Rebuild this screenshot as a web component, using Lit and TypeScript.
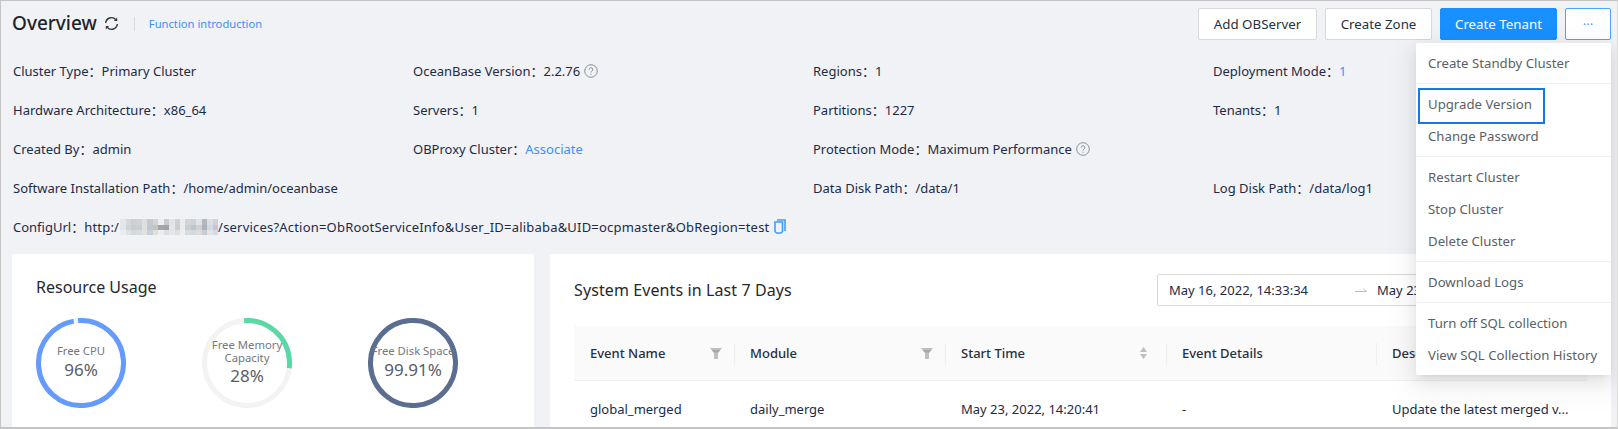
import { LitElement, html, css, svg } from "lit";
import { customElement } from "lit/decorators.js";

const info = [
  ["Cluster Type", "Primary Cluster"], ["OceanBase Version", "2.2.76", "help"], ["Regions", "1"], ["Deployment Mode", "1", "link"],
  ["Hardware Architecture", "x86_64"], ["Servers", "1"], ["Partitions", "1227"], ["Tenants", "1"],
  ["Created By", "admin"], ["OBProxy Cluster", "Associate", "link"], ["Protection Mode", "Maximum Performance", "help"], null,
  ["Software Installation Path", "/home/admin/oceanbase"], null, ["Data Disk Path", "/data/1"], ["Log Disk Path", "/data/log1"],
];

const helpIcon = html`<svg class="help" width="14" height="14" viewBox="0 0 14 14" fill="none" stroke="#8a8f99" stroke-width="1">
  <circle cx="7" cy="7" r="6.3"></circle>
  <path d="M5.2 5.6a1.8 1.8 0 1 1 2.7 1.5c-.6.4-.9.7-.9 1.4"></path>
  <path d="M7 9.8v1"></path></svg>`;

const menu = [
  ["Create Standby Cluster"], null, ["Upgrade Version", "focus"], ["Change Password"], null,
  ["Restart Cluster"], ["Stop Cluster"], ["Delete Cluster"], null, ["Download Logs"], null,
  ["Turn off SQL collection"], ["View SQL Collection History"],
];

const gauges = [
  { label: ["Free CPU"], value: "96%", arc: 98.2, color: "#659bff" },
  { label: ["Free Memory", "Capacity"], value: "28%", arc: 28, color: "#5ad8a6" },
  { label: ["Free Disk Space"], value: "99.91%", arc: 100, color: "#5b6e91" },
];

const mosaic = [
  ["#e4e6ea","#d6d8dd","#cfd0d4","#d2d2d6","#dcdee2","#c3c9d2","#d6d4d0","#eceef1","#c9ccce","#e2e3e6","#d0d2d2","#eaecef","#d2d6d6","#ccd2d6","#e0e2e4","#b3b7c0","#dcdee4","#ced0dc"],
  ["#e2e5e8","#cfd4d8","#c6ced0","#c9d0d2","#dfe0e4","#bec6d0","#c6c2ba","#a2a6ac","#a0a4aa","#e4e5e8","#cace cc","#eaecef","#c9ced4","#bec6cc","#ced0d6","#aeb2be","#d6d8e0","#c3c5d6"],
  ["#eaecef","#e0e1e4","#d6d8d9","#d9dcdc","#e0e1e4","#cad0d6","#e0dfda","#eceef1","#dededc","#e5e6e8","#dee0e0","#edeff2","#d7dce0","#d2d9de","#dedcd6","#c9ccd4","#e2e3e8","#d8d9e4"],
];

const filterIcon = html`<svg class="filter" width="12" height="11" viewBox="0 0 12 11"><path d="M0 0h12L8 5v6H4V5z" fill="#bfbfbf"></path><path d="M1.5 2h9L8 4.6H4z" fill="#a9a9a9"></path></svg>`;

@customElement("app-root")
export class AppRoot extends LitElement {
  static styles = css`
    :host { display: block; width: 1618px; height: 429px; overflow: hidden; font-family: "Noto Sans", "Noto Sans CJK SC", sans-serif; font-size: 13px; color: #1d2b45; }
    * { box-sizing: border-box; }
    .frame { position: relative; width: 1618px; height: 429px; overflow: hidden; background: #f0f2f6; border: 1px solid #c4c4c4; border-bottom-width: 2px; border-right-color: #dcdcdc; padding: 7px 6px 0 11px; }
    .head { display: flex; align-items: center; height: 31px; }
    h1 { margin: 0; font-size: 19px; font-weight: 500; color: #1f2329; line-height: 31px; }
    .refresh { margin-left: 7px; display: block; }
    .sep { width: 1px; height: 14px; background: #d8dade; margin: 0 14px 0 15px; }
    a { color: #3f8ffb; text-decoration: none; }
    .intro { font-size: 11.2px; }
    .spacer { flex: 1; }
    .btn { height: 32px; border: 1px solid #d9d9d9; background: #fff; border-radius: 2px; display: flex; align-items: center; justify-content: center; margin-left: 8px; font-size: 13.3px; color: #2a2f3a; }
    .b1 { width: 119px; } .b2 { width: 107px; } .b3 { width: 117px; background: #1890ff; border-color: #1890ff; color: #fff; }
    .b4 { width: 46px; border-color: #4da3ff; color: #4da3ff; }
    .grid { display: grid; grid-template-columns: repeat(4, 400px); grid-auto-rows: 39px; margin-top: 12px; padding-left: 1px; }
    .cell { display: flex; align-items: center; white-space: nowrap; }
    .help { margin-left: 4px; }
    .full { grid-column: 1 / -1; }
    .url { letter-spacing: .2px; }
    .mosaic { display: grid; grid-template-columns: repeat(18, 1fr); grid-template-rows: 6px 5px 5px; width: 98px; height: 16px; margin-left: 1px; flex: none; }
    .mosaic i { display: block; }
    .copy { margin-left: 5px; display: block; }
    .cards { display: grid; grid-template-columns: 522px 1fr; gap: 16px; margin-top: 8px; }
    .card { background: #fff; border-radius: 2px; height: 180px; overflow: hidden; }
    .res { padding: 21px 24px; }
    h2 { margin: 0; font-size: 16px; font-weight: 400; color: #25282d; line-height: 24px; }
    .events h2 { letter-spacing: .1px; }
    .gauges { display: grid; grid-template-columns: repeat(3, 166px); margin-top: 19px; }
    .gauge { position: relative; width: 90px; height: 90px; }
    .gauge svg { display: block; }
    .gtext { position: absolute; inset: 0; display: flex; flex-direction: column; align-items: center; justify-content: center; color: #73777f; white-space: nowrap; font-size: 11.3px; line-height: 12.5px; }
    .gtext b { font-weight: 400; font-size: 17px; line-height: 22px; margin-top: 1px; color: #595d66; }
    .events { padding: 20px 24px 0; }
    .ehead { display: flex; align-items: center; justify-content: space-between; height: 32px; }
    .range { width: 430px; height: 32px; border: 1px solid #d9d9d9; border-radius: 2px; display: flex; align-items: center; padding-left: 11px; flex: none; white-space: nowrap; }
    .arr { margin: 0 10px 0 47px; display: block; }
    .table { margin-top: 20px; }
    .tr { display: grid; grid-template-columns: 160px 211px 221px 210px 211px; }
    .th { height: 55px; background: #fafafa; border-bottom: 1px solid #f0f0f0; }
    .th > div { display: flex; align-items: center; justify-content: space-between; padding: 0 12px 0 16px; font-weight: 500; color: #2a2f3a; position: relative; white-space: nowrap; overflow: hidden; }
    .th > div + div::before { content: ""; position: absolute; left: 0; top: 17px; height: 22px; width: 1px; background: #eeeeee; }
    .td { height: 56px; }
    .td > div { display: flex; align-items: center; padding: 0 16px; white-space: nowrap; }
    .sort { display: block; margin-right: 6px; }
    .menu { position: absolute; left: 1415px; top: 42px; width: 195px; background: #fff; border-radius: 2px; padding: 4px 0; color: #5a5f68; font-size: 13.2px;
      box-shadow: 0 3px 6px -4px rgba(0,0,0,.12), 0 6px 16px 0 rgba(0,0,0,.08), 0 9px 28px 8px rgba(0,0,0,.05); }
    .mi { height: 32px; display: flex; align-items: center; padding: 0 12px; white-space: nowrap; position: relative; }
    .mi.focus::after { content: ""; position: absolute; left: 2px; top: 0; width: 123px; height: 32px; border: 2px solid #1677e6; }
    .div { height: 1px; background: #f0f0f0; margin: 4px 0; }
  `;

  gauge(g: (typeof gauges)[number]) {
    const r = 42.5;
    const c = 2 * Math.PI * r;
    const len = (g.arc / 100) * c;
    return html`<div class="gauge">
      <svg width="90" height="90" viewBox="0 0 90 90">
        <circle cx="45" cy="45" r="${r}" fill="none" stroke="#f3f3f3" stroke-width="5"></circle>
        ${svg`<circle cx="45" cy="45" r="${r}" fill="none" stroke="${g.color}" stroke-width="5"
          stroke-dasharray="${len} ${c - len}" transform="rotate(-94 45 45)"></circle>`}
      </svg>
      <div class="gtext">${g.label.map((l) => html`<span>${l}</span>`)}<b>${g.value}</b></div>
    </div>`;
  }

  render() {
    return html`<div class="frame">
      <div class="head">
        <h1>Overview</h1>
        <svg class="refresh" width="15" height="15" viewBox="0 0 15 15" fill="none" stroke="#333" stroke-width="1.4">
          <path d="M1.7 7A5.8 5.8 0 0 1 11.8 3.6"></path><path d="M13.3 8A5.8 5.8 0 0 1 3.2 11.4"></path>
          <path d="M13.2 1.6v3.4H9.9z" fill="#333" stroke="none"></path><path d="M1.8 13.4V10h3.3z" fill="#333" stroke="none"></path>
        </svg>
        <span class="sep"></span>
        <a class="intro">Function introduction</a>
        <span class="spacer"></span>
        <div class="btn b1">Add OBServer</div>
        <div class="btn b2">Create Zone</div>
        <div class="btn b3">Create Tenant</div>
        <div class="btn b4">···</div>
      </div>
      <div class="grid">
        ${info.map((row) => row ? html`<div class="cell"><span>${row[0]}：</span>${row[2] === "link" ? html`<a>${row[1]}</a>` : html`<span>${row[1]}</span>`}${row[2] === "help" ? helpIcon : ""}</div>` : html`<div></div>`)}
        <div class="cell full"><span>ConfigUrl：</span><span class="url">http:/</span><span class="mosaic">${mosaic.flat().map((c) => html`<i style="background:${c.replace(" ", "")}"></i>`)}</span><span class="url">/services?Action=ObRootServiceInfo&amp;User_ID=alibaba&amp;UID=ocpmaster&amp;ObRegion=test</span>
          <svg class="copy" width="12" height="15" viewBox="0 0 12 15" fill="none" stroke="#3f9bff" stroke-width="1.6"><path d="M3 1h8v11"></path><path d="M1 3h7.5v9.5L7 14H2.5L1 12.5z"></path></svg></div>
      </div>
      <div class="cards">
        <div class="card res">
          <h2>Resource Usage</h2>
          <div class="gauges">${gauges.map((g) => this.gauge(g))}</div>
        </div>
        <div class="card events">
          <div class="ehead"><h2>System Events in Last 7 Days</h2>
            <div class="range"><span>May 16, 2022, 14:33:34</span><svg class="arr" width="12" height="7" viewBox="0 0 12 7" fill="none" stroke="#bfbfbf"><path d="M0 4.5h11.5L8 1.5"></path></svg><span>May 23, 2022, 14:33:34</span></div>
          </div>
          <div class="table">
            <div class="tr th">
              <div>Event Name ${filterIcon}</div><div>Module ${filterIcon}</div>
              <div>Start Time <svg class="sort" width="9" height="14" viewBox="0 0 9 14" fill="#bfbfbf"><path d="M4.5 1L8 6H1z"></path><path d="M4.5 13L1 8h7z"></path></svg></div>
              <div>Event Details</div><div>Description</div>
            </div>
            <div class="tr td">
              <div>global_merged</div><div>daily_merge</div><div>May 23, 2022, 14:20:41</div><div>-</div><div>Update the latest merged v...</div>
            </div>
          </div>
        </div>
      </div>
      <div class="menu">
        ${menu.map((m) => m ? html`<div class="mi ${m[1] ?? ""}">${m[0]}</div>` : html`<div class="div"></div>`)}
      </div>
    </div>`;
  }
}
